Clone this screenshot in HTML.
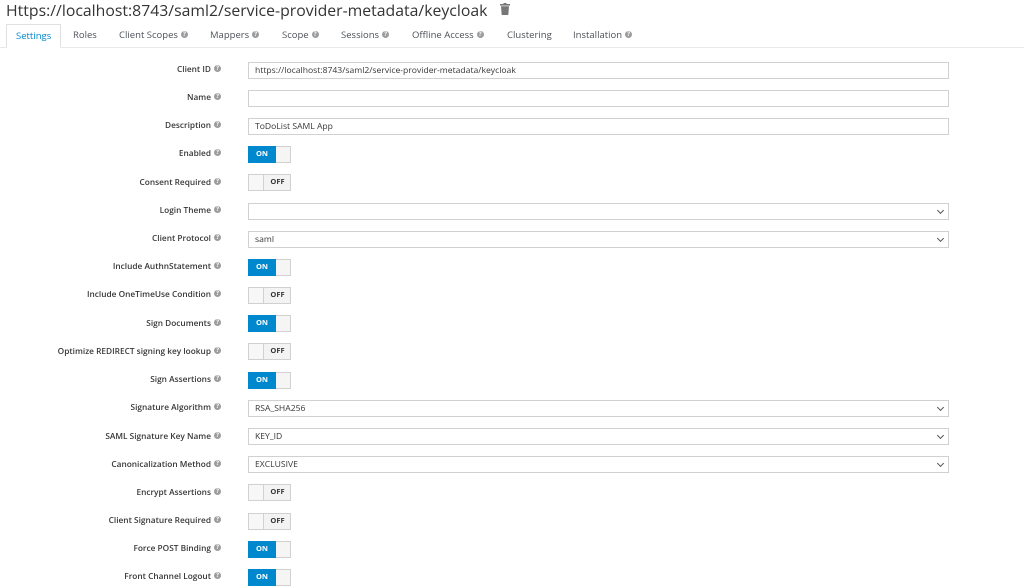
<!DOCTYPE html>
<html><head><meta charset="utf-8"><style>
*{box-sizing:border-box;margin:0;padding:0}
body{width:1024px;height:585px;overflow:hidden;background:#fff;font-family:"Open Sans","Liberation Sans",sans-serif;color:#363636;position:relative}
.title{position:absolute;left:6px;top:-1px;font-size:15.8px;color:#333;white-space:nowrap}
.trash{position:absolute;left:500px;top:3px;width:10px;height:12px}
.tabs{position:absolute;left:0;top:24px;width:1024px;height:24px;border-bottom:1px solid #e8e8e8}
.tab{position:absolute;top:0;height:24px;line-height:22px;font-size:9.5px;color:#4d5258;white-space:nowrap}
.tab.active{border:1px solid #e0e0e0;border-bottom:1px solid #fff;color:#0088ce;background:#fff;padding:0 9px}
.q{display:inline-block;width:7px;height:7px;border-radius:50%;background:#9a9c9e;color:#fff;font-size:6px;line-height:7px;text-align:center;vertical-align:middle;margin-left:3px;font-weight:700;position:relative;top:-1px}
.lbl{position:absolute;right:803px;font-size:8.3px;font-weight:600;color:#363636;white-space:nowrap;text-align:right;height:12px;line-height:12px}
.inp{position:absolute;left:248px;width:701px;height:17px;border:1px solid #d1d1d1;font-size:8.6px;line-height:15px;padding-left:6px;color:#363636}
.sel::after{content:"";position:absolute;right:5px;top:4px;width:4px;height:4px;border-right:1px solid #555;border-bottom:1px solid #555;transform:rotate(45deg)}
.on{position:absolute;left:248px;width:43px;height:17px;border:1px solid #d1d1d1;background:#f5f5f5}
.on b{position:absolute;left:-1px;top:-1px;width:28px;height:17px;background:#0088ce;color:#fff;font-size:7.5px;line-height:17px;text-align:center;font-weight:700}
.off{position:absolute;left:248px;width:43px;height:17px;border:1px solid #d1d1d1;background:#f3f3f3}
.off i{position:absolute;left:0;top:0;width:15px;height:15px;border-right:1px solid #d1d1d1;background:#f7f7f7}
.off b{position:absolute;left:15px;top:0;width:27px;height:15px;color:#363636;font-size:7.5px;line-height:15px;text-align:center;font-weight:700}
</style></head><body>
<div class="title">Https://localhost:8743/saml2/service-provider-metadata/keycloak</div>
<svg class="trash" viewBox="0 0 10 12"><rect x="0" y="1" width="10" height="1.6" fill="#777"/><rect x="3.5" y="0" width="3" height="1.5" fill="#777"/><path d="M1 3.3h8l-.7 8.7H1.7z" fill="#777"/></svg>
<div class="tabs">
<div class="tab active" style="left:6px">Settings</div>
<div class="tab" style="left:73px">Roles</div>
<div class="tab" style="left:119px">Client Scopes<span class="q">?</span></div>
<div class="tab" style="left:210px">Mappers<span class="q">?</span></div>
<div class="tab" style="left:282px">Scope<span class="q">?</span></div>
<div class="tab" style="left:341px">Sessions<span class="q">?</span></div>
<div class="tab" style="left:412px">Offline Access<span class="q">?</span></div>
<div class="tab" style="left:507px">Clustering</div>
<div class="tab" style="left:573px">Installation<span class="q">?</span></div>
</div>

<div class="lbl" style="top:64px">Client ID<span class="q">?</span></div>
<div class="inp" style="top:62px">https://localhost:8743/saml2/service-provider-metadata/keycloak</div>
<div class="lbl" style="top:92px">Name<span class="q">?</span></div>
<div class="inp" style="top:90px"></div>
<div class="lbl" style="top:120px">Description<span class="q">?</span></div>
<div class="inp" style="top:118px">ToDoList SAML App</div>
<div class="lbl" style="top:148px">Enabled<span class="q">?</span></div>
<div class="on" style="top:146px"><b>ON</b></div>
<div class="lbl" style="top:177px">Consent Required<span class="q">?</span></div>
<div class="off" style="top:174px"><i></i><b>OFF</b></div>
<div class="lbl" style="top:205px">Login Theme<span class="q">?</span></div>
<div class="inp sel" style="top:203px"></div>
<div class="lbl" style="top:233px">Client Protocol<span class="q">?</span></div>
<div class="inp sel" style="top:231px">saml</div>
<div class="lbl" style="top:261px">Include AuthnStatement<span class="q">?</span></div>
<div class="on" style="top:259px"><b>ON</b></div>
<div class="lbl" style="top:289px">Include OneTimeUse Condition<span class="q">?</span></div>
<div class="off" style="top:287px"><i></i><b>OFF</b></div>
<div class="lbl" style="top:318px">Sign Documents<span class="q">?</span></div>
<div class="on" style="top:315px"><b>ON</b></div>
<div class="lbl" style="top:346px">Optimize REDIRECT signing key lookup<span class="q">?</span></div>
<div class="off" style="top:343px"><i></i><b>OFF</b></div>
<div class="lbl" style="top:374px">Sign Assertions<span class="q">?</span></div>
<div class="on" style="top:372px"><b>ON</b></div>
<div class="lbl" style="top:402px">Signature Algorithm<span class="q">?</span></div>
<div class="inp sel" style="top:400px">RSA_SHA256</div>
<div class="lbl" style="top:431px">SAML Signature Key Name<span class="q">?</span></div>
<div class="inp sel" style="top:428px">KEY_ID</div>
<div class="lbl" style="top:459px">Canonicalization Method<span class="q">?</span></div>
<div class="inp sel" style="top:456px">EXCLUSIVE</div>
<div class="lbl" style="top:487px">Encrypt Assertions<span class="q">?</span></div>
<div class="off" style="top:484px"><i></i><b>OFF</b></div>
<div class="lbl" style="top:515px">Client Signature Required<span class="q">?</span></div>
<div class="off" style="top:513px"><i></i><b>OFF</b></div>
<div class="lbl" style="top:543px">Force POST Binding<span class="q">?</span></div>
<div class="on" style="top:541px"><b>ON</b></div>
<div class="lbl" style="top:571px">Front Channel Logout<span class="q">?</span></div>
<div class="on" style="top:569px"><b>ON</b></div>
</body></html>
